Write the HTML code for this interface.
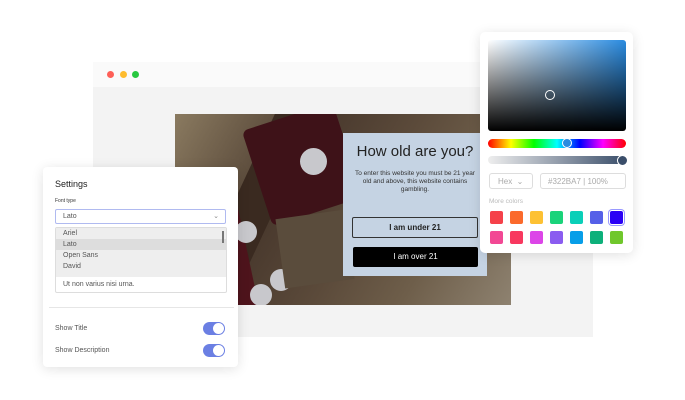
<!DOCTYPE html>
<html><head><style>
body{margin:0;width:685px;height:400px;background:#fff;position:relative;overflow:hidden;font-family:"Liberation Sans",sans-serif}
.a{position:absolute}
.dot{width:7px;height:7px;border-radius:50%;top:71px}
.sw{position:absolute;width:13px;height:13px;border-radius:2px}
.tg{position:absolute;width:22px;height:13px;border-radius:7px;background:#6b7fe3}
.tg:after{content:"";position:absolute;right:1px;top:1px;width:11px;height:11px;border-radius:50%;background:#fff}
.pip{position:absolute;border-radius:50%;background:#c8c8cc}
</style></head><body>
<div class="a" style="left:93px;top:62px;width:500px;height:275px;background:#f3f3f3"></div>
<div class="a" style="left:93px;top:62px;width:500px;height:25px;background:#fafafa"></div>
<div class="a dot" style="left:107px;background:#fe5f57"></div>
<div class="a dot" style="left:120px;background:#febc2e"></div>
<div class="a dot" style="left:132px;background:#28c840"></div>
<div class="a" style="left:175px;top:114px;width:336px;height:191px;overflow:hidden;background:linear-gradient(120deg,#8a7a60 0%,#4a3a2e 35%,#5b4a3a 55%,#6e5e4a 75%,#8e8270 100%)">
<div class="a" style="left:60px;top:-10px;width:40px;height:200px;background:#3a2a20;transform:rotate(25deg)"></div>
<div class="a" style="left:80px;top:0px;width:95px;height:100px;background:#3e1218;transform:rotate(-18deg);border-radius:6px"></div>
<div class="pip" style="left:125px;top:34px;width:27px;height:27px"></div>
<div class="a" style="left:-10px;top:100px;width:85px;height:110px;background:#4e141c;transform:rotate(-12deg)"></div>
<div class="pip" style="left:60px;top:107px;width:22px;height:22px"></div>
<div class="pip" style="left:95px;top:155px;width:22px;height:22px"></div>
<div class="pip" style="left:75px;top:170px;width:22px;height:22px"></div>
<div class="a" style="left:105px;top:100px;width:70px;height:70px;background:#5a4c3c;transform:rotate(-8deg)"></div>
</div>
<div class="a" style="left:343px;top:133px;width:144px;height:143px;background:#c5d3e3;text-align:center">
<div style="font-size:15px;color:#222;margin-top:10px">How old are you?</div>
<div style="font-size:6.5px;color:#333;margin:10px 12px 0;line-height:8px">To enter this website you must be 21 year old and above, this website contains gambling.</div>
<div class="a" style="left:9px;top:84px;width:124px;height:19px;border:1px solid #333;border-radius:2px;font-size:8px;line-height:19px;font-weight:bold;color:#222">I am under 21</div>
<div class="a" style="left:10px;top:114px;width:125px;height:20px;background:#000;border-radius:2px;font-size:8px;line-height:20px;color:#fff">I am over 21</div>
</div>
<div class="a" style="left:43px;top:167px;width:195px;height:200px;background:#fff;border-radius:4px;box-shadow:0 2px 12px rgba(0,0,0,.12);font-size:7px;color:#555">
<div class="a" style="left:12px;top:12px;font-size:9px;color:#222">Settings</div>
<div class="a" style="left:12px;top:31px;font-size:5px;color:#333">Font type</div>
<div class="a" style="left:12px;top:42px;width:162px;height:13px;border:1px solid #b0baf0;border-radius:2px;line-height:13px;padding-left:7px">Lato<span style="position:absolute;right:6px;color:#888">⌄</span></div>
<div class="a" style="left:12px;top:60px;width:170px;height:64px;border:1px solid #ddd;border-radius:2px;background:#fff">
<div style="background:#eee;height:49px;line-height:11px;padding-left:7px;position:relative">
<div>Ariel</div><div style="background:#ddd;margin-left:-7px;padding-left:7px">Lato</div><div>Open Sans</div><div>David</div>
<div style="position:absolute;right:2px;top:3px;width:2px;height:12px;background:#777"></div></div>
<div style="padding:4px 7px">Ut non varius nisi urna.</div></div>
<div class="a" style="left:6px;top:140px;width:185px;height:1px;background:#e6e6e6"></div>
<div class="a" style="left:12px;top:158px">Show Title</div>
<div class="a" style="left:12px;top:180px">Show Description</div>
<div class="tg" style="left:160px;top:155px"></div>
<div class="tg" style="left:160px;top:177px"></div>
</div>
<div class="a" style="left:480px;top:32px;width:153px;height:221px;background:#fff;border-radius:5px;box-shadow:0 2px 12px rgba(0,0,0,.12)"></div>
<div class="a" style="left:488px;top:40px;width:138px;height:91px;border-radius:3px;background:linear-gradient(to bottom,transparent,#000),linear-gradient(to right,#fff,#2a8be0)"></div>
<div class="a" style="left:545px;top:90px;width:8px;height:8px;border:1.5px solid #fff;border-radius:50%"></div>
<div class="a" style="left:488px;top:139px;width:138px;height:9px;border-radius:5px;background:linear-gradient(to right,#f00,#ff0,#0f0,#0ff,#00f,#f0f,#f00)"></div>
<div class="a" style="left:562px;top:138px;width:8px;height:8px;border:1.5px solid #fff;border-radius:50%;background:#2a8be0"></div>
<div class="a" style="left:488px;top:156px;width:138px;height:8px;border-radius:4px;background:linear-gradient(to right,#eee,#3a4e6a)"></div>
<div class="a" style="left:617px;top:155px;width:9px;height:9px;border-radius:50%;background:#3a4e6a;border:1px solid #fff"></div>
<div class="a" style="left:489px;top:173px;width:44px;height:16px;border:1px solid #ddd;border-radius:3px;font-size:8px;color:#aaa;line-height:16px;padding-left:8px;box-sizing:border-box">Hex &nbsp;⌄</div>
<div class="a" style="left:540px;top:173px;width:86px;height:16px;border:1px solid #ddd;border-radius:3px;font-size:8px;color:#aaa;line-height:16px;padding-left:7px;box-sizing:border-box">#322BA7 | 100%</div>
<div class="a" style="left:489px;top:198px;font-size:6.5px;color:#bbb">More colors</div>
<div class="sw" style="left:490px;top:211px;background:#f5414a"></div>
<div class="sw" style="left:510px;top:211px;background:#fb6a2c"></div>
<div class="sw" style="left:530px;top:211px;background:#fdc133"></div>
<div class="sw" style="left:550px;top:211px;background:#1ad37a"></div>
<div class="sw" style="left:570px;top:211px;background:#0acfb8"></div>
<div class="sw" style="left:590px;top:211px;background:#5560e8"></div>
<div class="sw" style="left:610px;top:211px;background:#2a00f5;box-shadow:0 0 0 1px #fff,0 0 0 2px #99f"></div>
<div class="sw" style="left:490px;top:231px;background:#f24894"></div>
<div class="sw" style="left:510px;top:231px;background:#f8385f"></div>
<div class="sw" style="left:530px;top:231px;background:#dc45e8"></div>
<div class="sw" style="left:550px;top:231px;background:#8a5cf0"></div>
<div class="sw" style="left:570px;top:231px;background:#079ee8"></div>
<div class="sw" style="left:590px;top:231px;background:#0db07a"></div>
<div class="sw" style="left:610px;top:231px;background:#70c72c"></div>
</body></html>
